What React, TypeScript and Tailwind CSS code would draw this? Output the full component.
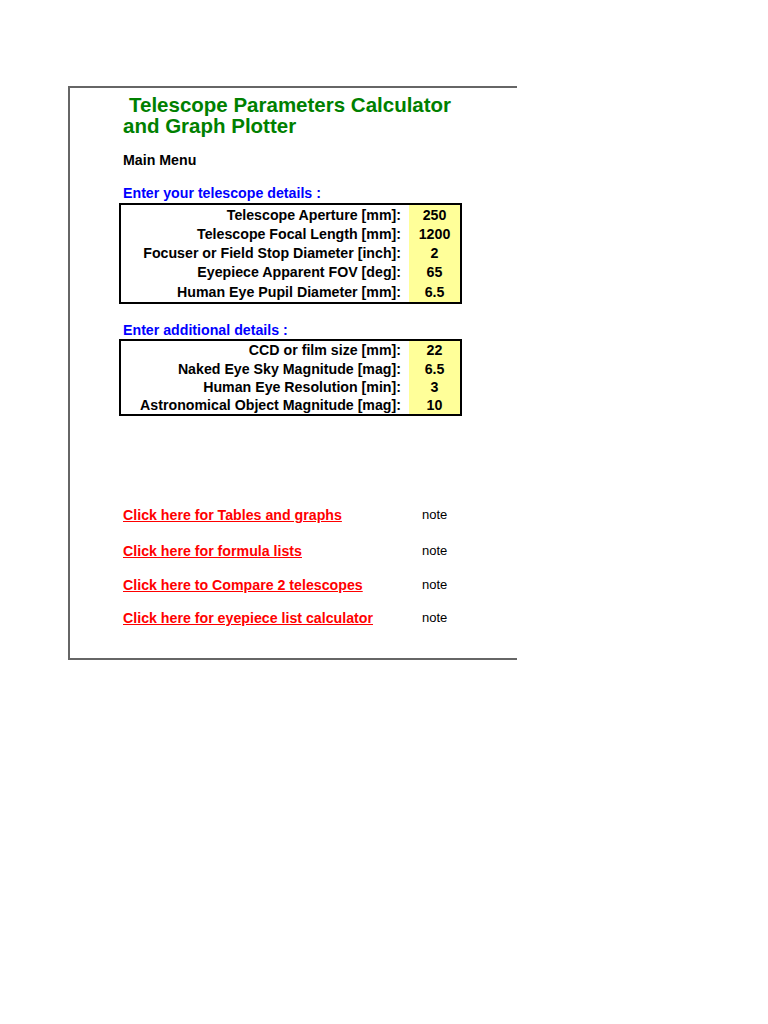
import React from 'react';

const TELESCOPE = [
  { label: 'Telescope Aperture [mm]:', value: '250', h: 'h-[20px]' },
  { label: 'Telescope Focal Length [mm]:', value: '1200', h: 'h-[19px]' },
  { label: 'Focuser or Field Stop Diameter [inch]:', value: '2', h: 'h-[19px]' },
  { label: 'Eyepiece Apparent FOV [deg]:', value: '65', h: 'h-[19px]' },
  { label: 'Human Eye Pupil Diameter [mm]:', value: '6.5', h: 'h-[20px]' },
];

const ADDITIONAL = [
  { label: 'CCD or film size [mm]:', value: '22', h: 'h-[19px]' },
  { label: 'Naked Eye Sky Magnitude [mag]:', value: '6.5', h: 'h-[18px]' },
  { label: 'Human Eye Resolution [min]:', value: '3', h: 'h-[19px]' },
  { label: 'Astronomical Object Magnitude [mag]:', value: '10', h: 'h-[17px]' },
];

const LINKS = [
  { text: 'Click here for Tables and graphs', mt: 'mt-0' },
  { text: 'Click here for formula lists', mt: 'mt-[20px]' },
  { text: 'Click here to Compare 2 telescopes', mt: 'mt-[18px]' },
  { text: 'Click here for eyepiece list calculator', mt: 'mt-[17px]' },
];

type Row = { label: string; value: string; h: string };

function ParamTable({ rows }: { rows: Row[] }) {
  return (
    <div className="ml-[49px] w-[343px] border-2 border-black flex flex-col">
      {rows.map((r) => (
        <div key={r.label} className={`flex ${r.h}`}>
          <div className="flex-1 flex items-center justify-end pr-[8px] font-bold text-[14.2px] leading-none text-black whitespace-nowrap">
            {r.label}
          </div>
          <div className="w-[51px] bg-[#ffff99] flex items-center justify-center font-bold text-[14.2px] leading-none text-black">
            {r.value}
          </div>
        </div>
      ))}
    </div>
  );
}

export default function App() {
  return (
    <div className="w-[768px] h-[1024px] bg-white pt-[86px] pl-[68px] font-['Liberation_Sans',Arial,sans-serif]">
      <div className="w-[449px] h-[574px] border-l-2 border-t-2 border-b-2 border-[#666666] flex flex-col">
        <div className="pl-[53px] pt-[6px] text-[20.5px] leading-[21px] font-bold text-[#008000]">
          <div className="pl-[6px]">Telescope Parameters Calculator</div>
          <div>and Graph Plotter</div>
        </div>

        <div className="pl-[53px] mt-[16px] text-[14.2px] leading-[16px] font-bold text-black">Main Menu</div>

        <div className="pl-[53px] mt-[17px] text-[14.2px] leading-[16px] font-bold text-[#0000ff]">
          Enter your telescope details :
        </div>
        <div className="mt-[2px]">
          <ParamTable rows={TELESCOPE} />
        </div>

        <div className="pl-[53px] mt-[18px] text-[14.2px] leading-[16px] font-bold text-[#0000ff]">
          Enter additional details :
        </div>
        <div className="mt-[1px]">
          <ParamTable rows={ADDITIONAL} />
        </div>

        <div className="pl-[53px] mt-[91px] flex flex-col">
          {LINKS.map((l) => (
            <div key={l.text} className={`flex items-center h-[16px] ${l.mt}`}>
              <a href="#" className="w-[299px] text-[14.2px] leading-[16px] font-bold text-[#ff0000] underline decoration-[#ff0000]">
                {l.text}
              </a>
              <span className="text-[13px] leading-[16px] text-black">note</span>
            </div>
          ))}
        </div>
      </div>
    </div>
  );
}
